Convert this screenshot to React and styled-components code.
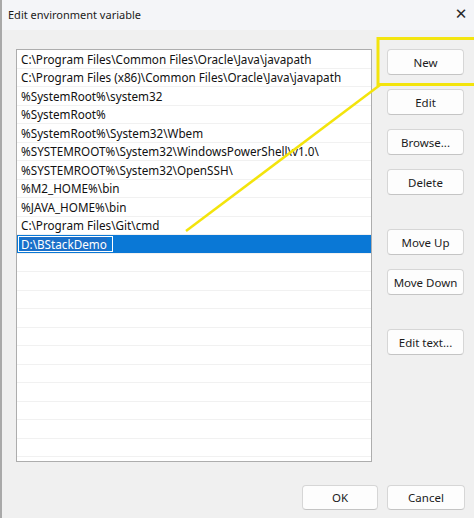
import React from "react";
import styled, { createGlobalStyle } from "styled-components";

const Global = createGlobalStyle`
  html, body { margin: 0; padding: 0; background: #f0f0f0; }
  body { font-family: "Noto Sans", "Open Sans", sans-serif; }
`;

const Window = styled.div`
  position: relative;
  width: 474px;
  height: 518px;
  box-sizing: border-box;
  border-left: 2px solid #a9a9a9;
  background: #f0f0f0;
  display: flex;
  flex-direction: column;
  overflow: hidden;
`;

const TitleBar = styled.div`
  height: 28px;
  flex: none;
  display: flex;
  align-items: center;
  padding: 0 0 2px 6px;
  background: #f4f5f8;
  font-size: 11px;
  color: #1b1b1b;
`;

const Title = styled.span`
  flex: 1;
`;

const Close = styled.span`
  flex: none;
  width: 16px;
  margin-right: 5px;
  font-size: 15px;
  line-height: 16px;
  text-align: center;
  color: #2a2a2a;
  font-family: "DejaVu Sans", sans-serif;
`;

const Body = styled.div`
  flex: 1;
  display: flex;
  flex-direction: column;
  padding: 19px 9px 0 14px;
`;

const Main = styled.div`
  display: flex;
  gap: 15px;
`;

const ListBox = styled.div`
  width: 356px;
  height: 413px;
  box-sizing: border-box;
  border: 1px solid #adadad;
  background: #ffffff;
  overflow: hidden;
  display: flex;
  flex-direction: column;
`;

const Row = styled.div`
  height: 18.5px;
  flex: none;
  box-sizing: border-box;
  border-bottom: 1px solid #f1f1f1;
  display: flex;
  align-items: center;
  padding-left: 4px;
  font-size: 11.7px;
  color: #111;
  white-space: nowrap;
  background: ${(p) => (p.$selected ? "#0a78d6" : "transparent")};
`;

const EditBox = styled.div`
  margin-left: -3px;
  height: 16px;
  width: 95px;
  box-sizing: border-box;
  border: 1px solid #ffffff;
  display: flex;
  align-items: center;
  padding-left: 2px;
`;

const Highlight = styled.span`
  background: #1a6fc9;
  color: #ffffff;
  line-height: 14px;
`;

const ButtonColumn = styled.div`
  display: flex;
  flex-direction: column;
  gap: 14px;
`;

const Button = styled.div`
  width: 77px;
  height: 26px;
  box-sizing: border-box;
  border: 1px solid #d6d6d6;
  border-bottom-color: #c4c4c4;
  border-radius: 4px;
  background: #fdfdfd;
  display: flex;
  align-items: center;
  justify-content: center;
  font-size: 11.5px;
  color: #1b1b1b;
  margin-top: ${(p) => (p.$spaced ? "20px" : "0")};
`;

const Footer = styled.div`
  display: flex;
  justify-content: flex-end;
  gap: 9px;
  padding-top: 23px;
`;

const FooterButton = styled(Button)`
  width: ${(p) => p.$w}px;
  height: 25px;
`;

const Overlay = styled.svg`
  position: absolute;
  left: -2px;
  top: 0;
  pointer-events: none;
`;

const items = [
  "C:\\Program Files\\Common Files\\Oracle\\Java\\javapath",
  "C:\\Program Files (x86)\\Common Files\\Oracle\\Java\\javapath",
  "%SystemRoot%\\system32",
  "%SystemRoot%",
  "%SystemRoot%\\System32\\Wbem",
  "%SYSTEMROOT%\\System32\\WindowsPowerShell\\v1.0\\",
  "%SYSTEMROOT%\\System32\\OpenSSH\\",
  "%M2_HOME%\\bin",
  "%JAVA_HOME%\\bin",
  "C:\\Program Files\\Git\\cmd",
];

export default function App() {
  const empties = Array.from({ length: 11 });
  return (
    <>
      <Global />
      <Window>
        <TitleBar>
          <Title>Edit environment variable</Title>
          <Close>✕</Close>
        </TitleBar>
        <Body>
          <Main>
            <ListBox>
              {items.map((t) => (
                <Row key={t}>{t}</Row>
              ))}
              <Row $selected>
                <EditBox>
                  <Highlight>D:\BStackDemo</Highlight>
                </EditBox>
              </Row>
              {empties.map((_, i) => (
                <Row key={"e" + i} />
              ))}
            </ListBox>
            <ButtonColumn>
              <Button>New</Button>
              <Button>Edit</Button>
              <Button>Browse...</Button>
              <Button>Delete</Button>
              <Button $spaced>Move Up</Button>
              <Button>Move Down</Button>
              <Button $spaced>Edit text...</Button>
            </ButtonColumn>
          </Main>
          <Footer>
            <FooterButton $w={76}>OK</FooterButton>
            <FooterButton $w={78}>Cancel</FooterButton>
          </Footer>
        </Body>
        <Overlay width="474" height="518" viewBox="0 0 474 518">
          <rect x="378" y="38.5" width="110" height="46" fill="none" stroke="#f3e40c" strokeWidth="3" />
          <line x1="186" y1="231" x2="380" y2="85" stroke="#f3e40c" strokeWidth="2.5" />
        </Overlay>
      </Window>
    </>
  );
}
